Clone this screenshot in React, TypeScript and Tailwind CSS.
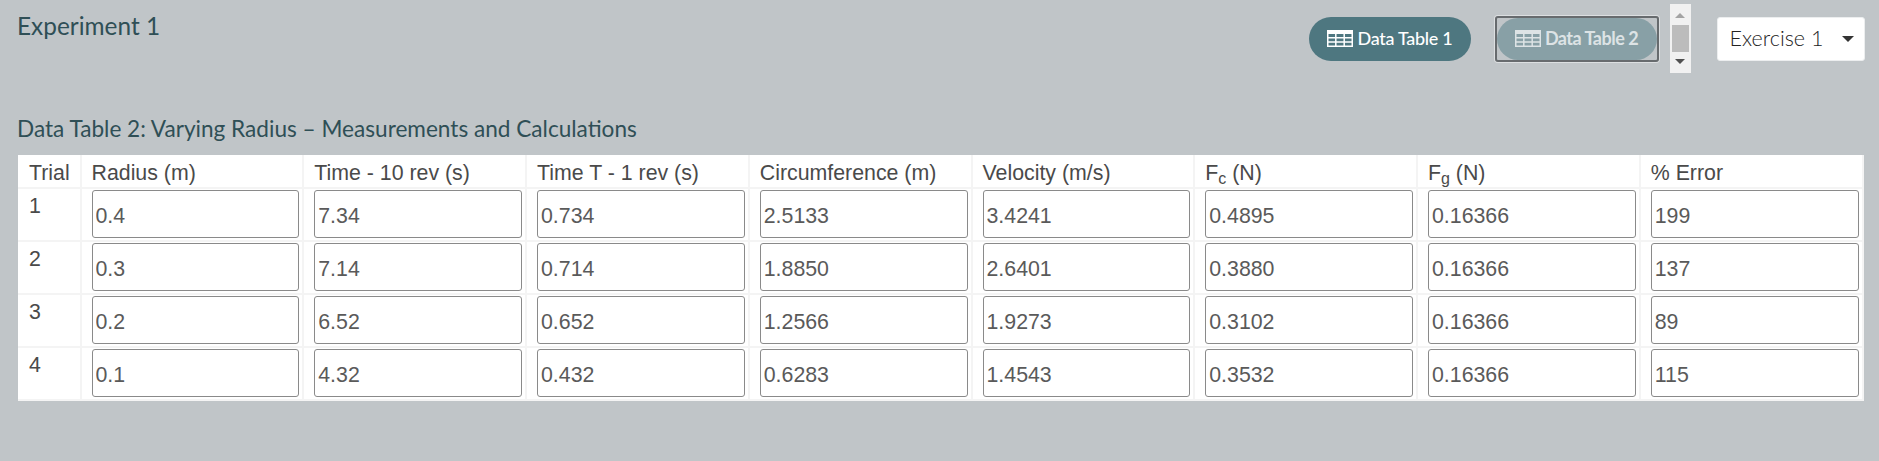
import React from "react";

const rows = [
  ["1", "0.4", "7.34", "0.734", "2.5133", "3.4241", "0.4895", "0.16366", "199"],
  ["2", "0.3", "7.14", "0.714", "1.8850", "2.6401", "0.3880", "0.16366", "137"],
  ["3", "0.2", "6.52", "0.652", "1.2566", "1.9273", "0.3102", "0.16366", "89"],
  ["4", "0.1", "4.32", "0.432", "0.6283", "1.4543", "0.3532", "0.16366", "115"],
];

function TableIcon() {
  return (
    <svg width="26" height="17" viewBox="0 0 26 17" fill="none" stroke="currentColor" strokeWidth="1.5" className="shrink-0">
      <rect x="0.75" y="0.75" width="24.5" height="15.5" />
      <rect x="0" y="0" width="26" height="4" fill="currentColor" stroke="none" />
      <path d="M0 7.8H26M0 12H26M8.8 4V16M17.2 4V16" />
    </svg>
  );
}

function Head({ children, first }: { children: React.ReactNode; first?: boolean }) {
  return (
    <th className={`h-[33px] overflow-hidden border-r-2 border-b-2 border-[#f4f4f4] pt-[6px] text-left align-top leading-[24px] font-normal ${first ? "w-[62.5px] pl-[11px]" : "pl-[10px]"}`}>
      {children}
    </th>
  );
}

export default function App() {
  return (
    <div className="h-[461px] overflow-hidden bg-[#c0c5c8] pr-[14px] pl-[18px] font-['Lato',sans-serif]">
      <div className="flex h-[109px] items-start justify-between">
        <h1 className="-ml-[1px] pt-[11px] text-[24.4px] leading-[30px] font-normal text-[#2f4f56]">Experiment 1</h1>
        <div className="flex items-start pt-[4px]">
          <button className="mt-[13px] flex h-[44px] w-[162px] items-center justify-center gap-[5px] rounded-full bg-[#4e7780] pb-[2px] text-[18px] font-medium tracking-[-0.3px] text-white">
            <TableIcon />
            Data Table 1
          </button>
          <div className="mt-[12px] ml-[24px] rounded-[3px] border-[2px] border-[#676b6e] shadow-[0_0_0_1px_rgba(255,255,255,0.45)]">
            <button className="flex h-[42px] w-[160px] items-center justify-center gap-[4px] rounded-full bg-[#88a0a6] pb-[2px] text-[18px] font-bold tracking-[-0.5px] text-[#dde3e5]">
              <TableIcon />
              Data Table 2
            </button>
          </div>
          <div className="ml-[11px] flex h-[69px] w-[21px] flex-col items-center bg-[#f1f1f1]">
            <div className="mt-[9px] h-0 w-0 border-x-[5px] border-b-[5px] border-x-transparent border-b-[#a3a3a3]" />
            <div className="mt-[7px] h-[27px] w-[17px] bg-[#bcbcbc]" />
            <div className="mt-[7px] h-0 w-0 border-x-[5px] border-t-[5px] border-x-transparent border-t-[#505050]" />
          </div>
          <div className="mt-[13px] ml-[26px] flex h-[44px] w-[148.5px] items-center justify-between rounded-[3px] border border-[#eceeef] bg-white pr-[10px] pb-[2px] pl-[12px] text-[21.5px] font-light text-[#222]">
            Exercise 1
            <span className="mt-[2px] h-0 w-0 border-x-[6.5px] border-t-[6px] border-x-transparent border-t-[#333]" />
          </div>
        </div>
      </div>
      <h2 className="-ml-[1px] h-[46px] pt-[5px] text-[22.6px] leading-[30px] font-normal text-[#2f4f56]">Data Table 2: Varying Radius – Measurements and Calculations</h2>
      <table className="w-[1845.5px] table-fixed border-collapse bg-white font-['Liberation_Sans',sans-serif] text-[21.33px] text-[#4a4a4a]">
        <thead>
          <tr>
            <Head first>Trial</Head>
            <Head>Radius (m)</Head>
            <Head>Time - 10 rev (s)</Head>
            <Head>Time T - 1 rev (s)</Head>
            <Head>Circumference (m)</Head>
            <Head>Velocity (m/s)</Head>
            <Head>F<sub className="text-[16px] leading-none">c</sub> (N)</Head>
            <Head>F<sub className="text-[16px] leading-none">g</sub> (N)</Head>
            <Head>% Error</Head>
          </tr>
        </thead>
        <tbody>
          {rows.map((r) => (
            <tr key={r[0]}>
              <td className="h-[53px] border-r-2 border-b-2 border-[#f4f4f4] pt-[5px] pl-[11px] align-top leading-[24px]">{r[0]}</td>
              {r.slice(1).map((v, i) => (
                <td key={i} className="h-[53px] border-r-2 border-b-2 border-[#f4f4f4] pt-[1px] pr-[3px] pl-[10px] align-top">
                  <input readOnly value={v} className="block h-[48px] w-full rounded-[3px] border border-[#8a8a8a] bg-white pt-[4px] pl-[3px] text-[21.33px] text-[#5a5a5a]" />
                </td>
              ))}
            </tr>
          ))}
        </tbody>
      </table>
    </div>
  );
}
